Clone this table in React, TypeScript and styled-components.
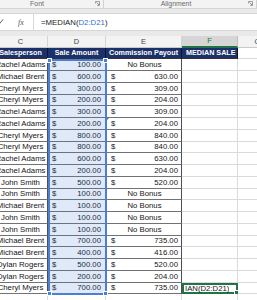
import React from 'react';
import styled, { createGlobalStyle, css } from 'styled-components';

const GlobalStyle = createGlobalStyle`
  html, body { margin: 0; padding: 0; background: #ffffff; }
  body { font-family: "Liberation Sans", Arial, sans-serif; overflow: hidden; }
`;

const Frame = styled.div`
  width: 257px;
  height: 300px;
  overflow: hidden;
  display: flex;
  flex-direction: column;
  background: #e9e9e9;
`;

const Ribbon = styled.div`
  flex: none;
  height: 9px;
  box-sizing: border-box;
  display: flex;
  background: #f3f3f3;
  border-bottom: 1px solid #d4d4d4;
`;

const RibbonGroup = styled.div<{ $w: number; $offset?: number }>`
  flex: none;
  box-sizing: border-box;
  width: ${p => p.$w}px;
  margin-left: ${p => p.$offset ?? 0}px;
  display: flex;
  align-items: flex-start;
  padding-right: 3px;
  border-right: 1px solid #d2d2d2;
`;

const GroupLabel = styled.div`
  flex: 1;
  text-align: center;
  font-size: 6.9px;
  line-height: 7px;
  color: #6a6a6a;
`;

const Launcher = styled.svg`
  flex: none;
  width: 5px;
  height: 5px;
  margin-top: 1px;
`;

const Strip = styled.div<{ $h: number }>`
  flex: none;
  height: ${p => p.$h}px;
  background: #e9e9e9;
`;

const FormulaBar = styled.div`
  flex: none;
  height: 18px;
  box-sizing: border-box;
  display: flex;
  align-items: stretch;
  background: #ffffff;
  border-top: 1px solid #d6d6d6;
  border-bottom: 1px solid #d6d6d6;
`;

const FxZone = styled.div`
  flex: none;
  width: 34px;
  box-sizing: border-box;
  display: flex;
  align-items: center;
  border-right: 1px solid #d9d9d9;
`;

const CheckIcon = styled.svg`
  flex: none;
  width: 8px;
  height: 8px;
  margin-left: -4px;
`;

const FxLabel = styled.span`
  margin-left: 14px;
  font-family: "Liberation Serif", "Times New Roman", serif;
  font-style: italic;
  font-size: 8px;
  color: #555;
`;

const FormulaText = styled.div`
  display: flex;
  align-items: center;
  padding-left: 7px;
  font-size: 7.8px;
  color: #222;
  white-space: nowrap;
`;

const RefText = styled.span`
  color: #3b6fc6;
`;

const sheetTemplate = css`
  display: grid;
  grid-template-columns: 54px 58px 76px 56px 40px;
  grid-template-rows: 11.5px repeat(22, 11.75px);
`;

const SheetStack = styled.div`
  flex: none;
  margin-left: -6px;
  display: grid;
  background: #ffffff;
  & > * {
    grid-area: 1 / 1;
  }
`;

const CellGrid = styled.div`
  ${sheetTemplate}
`;

const OverlayGrid = styled.div`
  ${sheetTemplate}
  pointer-events: none;
`;

const ColHead = styled.div<{ $active?: boolean }>`
  box-sizing: border-box;
  display: flex;
  align-items: center;
  justify-content: center;
  font-size: 7.5px;
  color: ${p => (p.$active ? '#217346' : '#444')};
  background: ${p => (p.$active ? '#d6d6d6' : '#f3f3f3')};
  border-right: 1px solid ${p => (p.$active ? '#bdbdbd' : '#d4d4d4')};
  border-bottom: ${p => (p.$active ? '2px solid #217346' : '1px solid #c9c9c9')};
`;

const HeadCell = styled.div<{ $align?: 'center' | 'left' }>`
  box-sizing: border-box;
  display: flex;
  align-items: center;
  justify-content: ${p => (p.$align === 'left' ? 'flex-start' : 'center')};
  padding-left: ${p => (p.$align === 'left' ? '4px' : '0')};
  white-space: nowrap;
  overflow: hidden;
  font-size: 7.2px;
  font-weight: 700;
  color: #ffffff;
  background: #1c3169;
  border-right: 1px solid #0b1634;
  border-bottom: 1px solid #333;
`;

const Cell = styled.div<{ $tone: 'table' | 'grid'; $align?: 'center' | 'left' | 'split' }>`
  position: relative;
  box-sizing: border-box;
  display: flex;
  align-items: center;
  justify-content: ${p =>
    p.$align === 'split' ? 'space-between' : p.$align === 'left' ? 'flex-start' : 'center'};
  white-space: nowrap;
  overflow: hidden;
  font-size: 7.75px;
  color: #151515;
  border-right: 1px solid ${p => (p.$tone === 'table' ? '#4f4f4f' : '#dadada')};
  border-bottom: 1px solid ${p => (p.$tone === 'table' ? '#727272' : '#dadada')};
`;

const SaleCell = styled(Cell)`
  padding: 0 4px 0 4px;
`;

const PayoutCell = styled(Cell)`
  padding: 0 3px 0 5px;
`;

const ErrorMark = styled.span`
  position: absolute;
  top: 0;
  left: 0;
  width: 0;
  height: 0;
  border-top: 3px solid #1f8a4c;
  border-right: 3px solid transparent;
`;

const ActiveCell = styled.div`
  position: relative;
  box-sizing: border-box;
  display: flex;
  align-items: center;
  padding-left: 1px;
  white-space: nowrap;
  font-size: 7.75px;
  color: #151515;
  border: 2px solid #217346;
`;

const ActiveText = styled.span`
  overflow: hidden;
`;

const RefRange = styled.div`
  grid-column: 2;
  grid-row: 3 / 23;
  position: relative;
  box-sizing: border-box;
  margin: 0 -1px -1px 0;
  border: 2px solid #4a7fd4;
  background: rgba(74, 127, 212, 0.17);
`;

const Handle = styled.span<{ $v: 'top' | 'bottom'; $h: 'left' | 'right'; $color: string }>`
  position: absolute;
  ${p => p.$v}: -3px;
  ${p => p.$h}: -3px;
  width: 3px;
  height: 3px;
  background: ${p => p.$color};
  border: 1px solid #ffffff;
`;

type Row = [string, number, number | null];

const rows: Row[] = [
  ['Rachel Adams', 100, null],
  ['Michael Brent', 600, 630],
  ['Cheryl Myers', 300, 309],
  ['Cheryl Myers', 200, 204],
  ['Rachel Adams', 300, 309],
  ['Rachel Adams', 200, 204],
  ['Cheryl Myers', 800, 840],
  ['Cheryl Myers', 800, 840],
  ['Rachel Adams', 600, 630],
  ['Rachel Adams', 200, 204],
  ['John Smith', 500, 520],
  ['John Smith', 100, null],
  ['Michael Brent', 100, null],
  ['John Smith', 100, null],
  ['John Smith', 100, null],
  ['Michael Brent', 700, 735],
  ['Michael Brent', 400, 416],
  ['Dylan Rogers', 500, 520],
  ['Dylan Rogers', 200, 204],
  ['Cheryl Myers', 700, 735],
];

const fmt = (n: number) => n.toFixed(2);

const LauncherIcon = () => (
  <Launcher viewBox="0 0 5 5">
    <path d="M0.5 2.5V0.5H4.5V4.5H2.5" fill="none" stroke="#8a8a8a" strokeWidth="0.8" />
    <path d="M1.5 1.5L4 4M4 2.6V4H2.6" fill="none" stroke="#8a8a8a" strokeWidth="0.8" />
  </Launcher>
);

export default function App() {
  return (
    <>
      <GlobalStyle />
      <Frame>
        <Ribbon>
          <RibbonGroup $w={125} $offset={-21}>
            <GroupLabel>Font</GroupLabel>
            <LauncherIcon />
          </RibbonGroup>
          <RibbonGroup $w={153}>
            <GroupLabel>Alignment</GroupLabel>
            <LauncherIcon />
          </RibbonGroup>
        </Ribbon>
        <Strip $h={4} />
        <FormulaBar>
          <FxZone>
            <CheckIcon viewBox="0 0 8 8">
              <path d="M0.8 4.2L3 6.4L7.2 1.2" fill="none" stroke="#555" strokeWidth="0.9" />
            </CheckIcon>
            <FxLabel>fx</FxLabel>
          </FxZone>
          <FormulaText>
            =MEDIAN(<RefText>D2:D21</RefText>)
          </FormulaText>
        </FormulaBar>
        <Strip $h={5} />
        <SheetStack>
          <CellGrid>
            <ColHead>C</ColHead>
            <ColHead>D</ColHead>
            <ColHead>E</ColHead>
            <ColHead $active>F</ColHead>
            <ColHead>G</ColHead>

            <HeadCell>Salesperson</HeadCell>
            <HeadCell>Sale Amount</HeadCell>
            <HeadCell>Commission Payout</HeadCell>
            <HeadCell $align="left">MEDIAN SALE</HeadCell>
            <Cell $tone="grid" />

            {rows.map(([name, sale, pay], i) => {
              const last = i === rows.length - 1;
              return (
                <React.Fragment key={i}>
                  <Cell $tone="table">{name}</Cell>
                  <SaleCell $tone="table" $align="split">
                    <span>$</span>
                    <span>{fmt(sale)}</span>
                  </SaleCell>
                  {pay === null ? (
                    <PayoutCell $tone="table">No Bonus</PayoutCell>
                  ) : (
                    <PayoutCell $tone="table" $align="split">
                      {i === 5 && <ErrorMark />}
                      <span>$</span>
                      <span>{fmt(pay)}</span>
                    </PayoutCell>
                  )}
                  {last ? (
                    <ActiveCell>
                      <ActiveText>IAN(D2:D21)</ActiveText>
                      <Handle $v="bottom" $h="right" $color="#217346" />
                    </ActiveCell>
                  ) : (
                    <Cell $tone="grid" />
                  )}
                  <Cell $tone="grid" />
                </React.Fragment>
              );
            })}

            <Cell $tone="grid" />
            <Cell $tone="grid" />
            <Cell $tone="grid" />
            <Cell $tone="grid" />
            <Cell $tone="grid" />
          </CellGrid>
          <OverlayGrid>
            <RefRange>
              <Handle $v="top" $h="left" $color="#4a7fd4" />
              <Handle $v="top" $h="right" $color="#4a7fd4" />
              <Handle $v="bottom" $h="left" $color="#4a7fd4" />
              <Handle $v="bottom" $h="right" $color="#4a7fd4" />
            </RefRange>
          </OverlayGrid>
        </SheetStack>
      </Frame>
    </>
  );
}
